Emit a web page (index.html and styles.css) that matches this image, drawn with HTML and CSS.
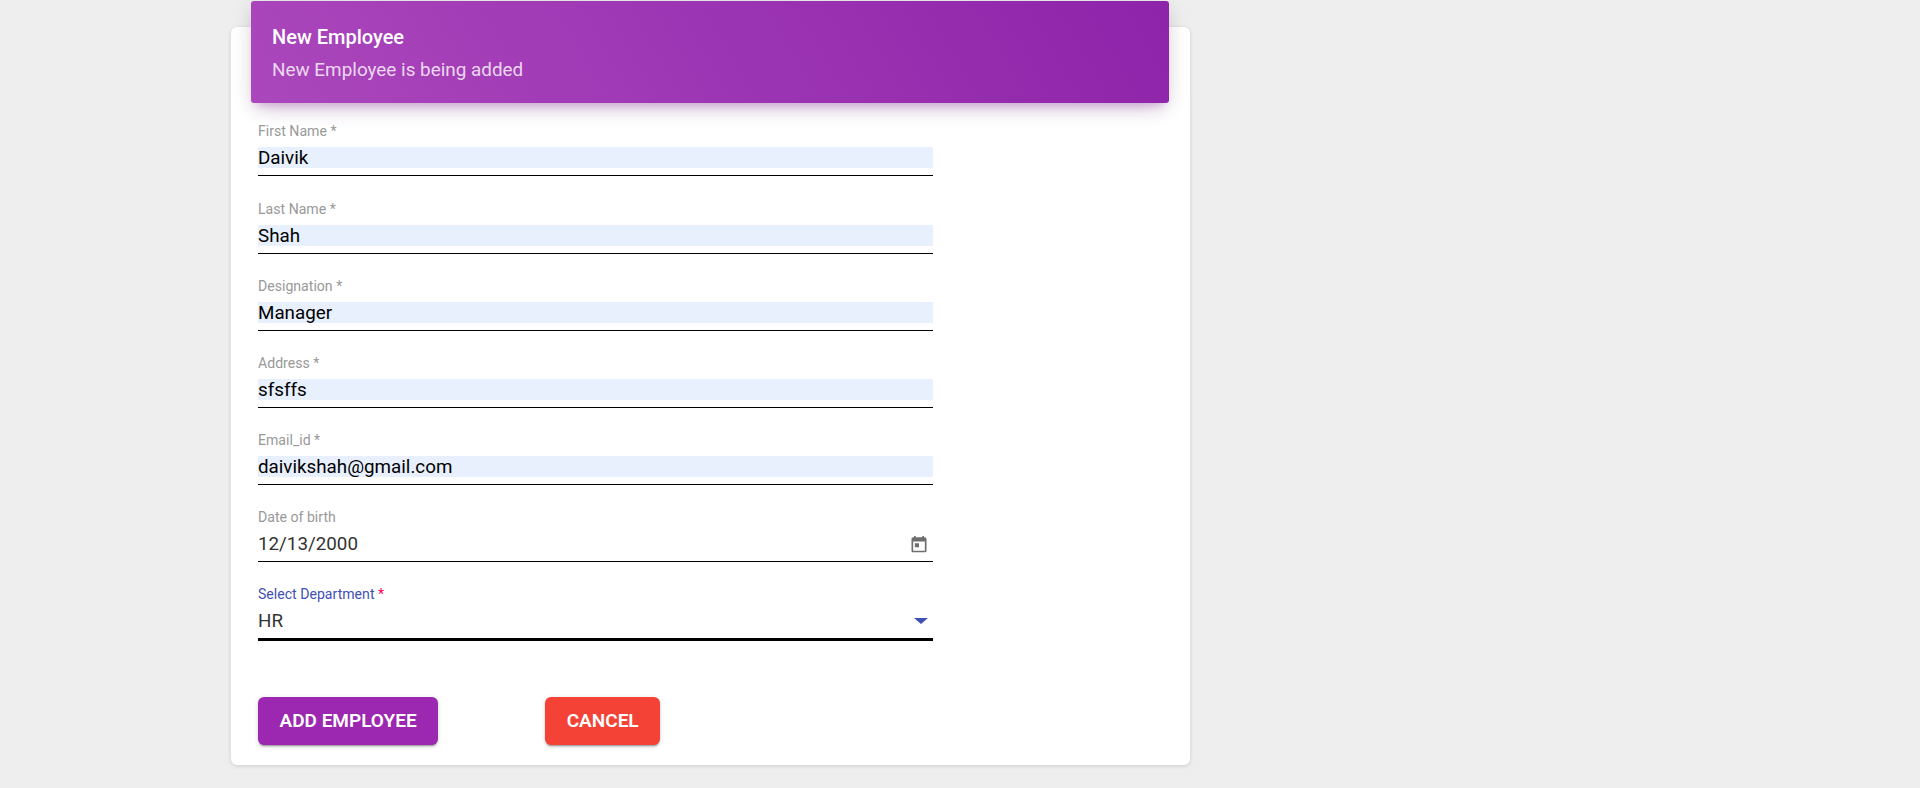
FILE: index.html
```html
<!DOCTYPE html>
<html lang="en">
<head>
    <meta charset="UTF-8">
    <meta name="viewport" content="width=device-width, initial-scale=1.0">
    <title>New Employee</title>
    <link rel="stylesheet" href="styles.css">
</head>
<body>
<div class="card">
    <div class="card-header">
        <h4>New Employee</h4>
        <p>New Employee is being added</p>
    </div>
    <form class="card-body">
        <div class="field">
            <label>First Name *</label>
            <div class="value"><span class="autofill">Daivik</span></div>
        </div>
        <div class="field">
            <label>Last Name *</label>
            <div class="value"><span class="autofill">Shah</span></div>
        </div>
        <div class="field">
            <label>Designation *</label>
            <div class="value"><span class="autofill">Manager</span></div>
        </div>
        <div class="field">
            <label>Address *</label>
            <div class="value"><span class="autofill">sfsffs</span></div>
        </div>
        <div class="field">
            <label>Email_id *</label>
            <div class="value"><span class="autofill">daivikshah@gmail.com</span></div>
        </div>
        <div class="field">
            <label>Date of birth</label>
            <div class="value date">
                <span class="plain">12/13/2000</span>
                <svg class="calendar" width="20" height="20" viewBox="0 0 24 24"><path fill="#6e6e6e" d="M19 4h-1V2.500h-2V4H8V2.500H6V4H5c-1.100 0-2 .9-2 2v14c0 1.100.9 2 2 2h14c1.100 0 2-.9 2-2V6c0-1.100-.9-2-2-2zm0 16H5V9h14v11zM7 11h5v5H7z"/></svg>
            </div>
        </div>
        <div class="field focused">
            <label>Select Department <span class="star">*</span></label>
            <div class="value select">
                <span class="plain">HR</span>
                <svg class="arrow" width="16" height="8" viewBox="0 0 16 8"><path fill="#3f51b5" d="M1 1h14L8 7z"/></svg>
            </div>
        </div>
        <div class="actions">
            <button type="button" class="btn btn-add">Add Employee</button>
            <button type="button" class="btn btn-cancel">Cancel</button>
        </div>
    </form>
</div>
</body>
</html>
```

FILE: styles.css
```css
html, body {
    height: 100%;
}
body {
    font-family: Roboto, "Liberation Sans", sans-serif;
    background-color: #eeeeee;
    margin: 0;
    padding: 27px 0 0 231px;
    box-sizing: border-box;
    overflow: hidden;
}
.card {
    display: flow-root;
    width: 959px;
    height: 738px;
    background-color: #fff;
    border-radius: 6px;
    box-shadow: 0 1px 4px 0 rgba(0, 0, 0, 0.14);
}
.card-header {
    box-sizing: border-box;
    height: 102px;
    margin: -26px 21px 0 20px;
    padding: 21px 21px 0;
    border-radius: 3px;
    color: #fff;
    background: linear-gradient(60deg, #ab47bc, #8e24aa);
    box-shadow: 0 12px 20px -10px rgba(156, 39, 176, 0.28), 0 4px 20px 0 rgba(0, 0, 0, 0.12), 0 7px 8px -5px rgba(156, 39, 176, 0.2);
}
.card-header h4 {
    margin: 0;
    font-size: 20px;
    font-weight: 500;
    line-height: 30px;
}
.card-header p {
    margin: 3px 0 0;
    font-size: 18.9px;
    font-weight: 400;
    line-height: 30px;
    color: rgba(255, 255, 255, 0.8);
}
.card-body {
    padding: 18.4px 0 0 27px;
    width: 675px;
}
.field {
    height: 77.2px;
}
.field label {
    display: block;
    font-size: 14.1px;
    line-height: 20px;
    color: #999;
    font-weight: 400;
}
.value {
    display: flex;
    align-items: flex-start;
    justify-content: space-between;
    box-sizing: border-box;
    height: 35px;
    padding-top: 6px;
    font-size: 18.8px;
    line-height: 19px;
    color: #333;
    border-bottom: 1px solid #000;
}
.autofill, .plain {
    padding-top: 2px;
}
.autofill {
    flex: 1;
    background-color: #e8f0fe;
    color: #000;
}
.calendar {
    margin: 1px 4px 0 0;
}
.focused {
    margin-top: -0.6px;
}
.focused label {
    color: #3f51b5;
}
.star {
    color: #f50057;
}
.select {
    height: 37px;
    border-bottom: 3px solid #000;
}
.arrow {
    margin: 7px 4px 0 0;
}
.actions {
    display: flex;
    gap: 107px;
    margin-top: 36.2px;
}
.btn {
    height: 48px;
    padding: 0 21.5px 2px;
    border: none;
    border-radius: 6px;
    color: #fff;
    font-family: inherit;
    font-size: 19px;
    font-weight: 600;
    text-transform: uppercase;
    cursor: pointer;
    box-shadow: 0 2px 2px 0 rgba(0, 0, 0, 0.14), 0 3px 1px -2px rgba(0, 0, 0, 0.2), 0 1px 5px 0 rgba(0, 0, 0, 0.12);
}
.btn-add {
    background-color: #9c27b0;
}
.btn-cancel {
    background-color: #f44336;
}
```
